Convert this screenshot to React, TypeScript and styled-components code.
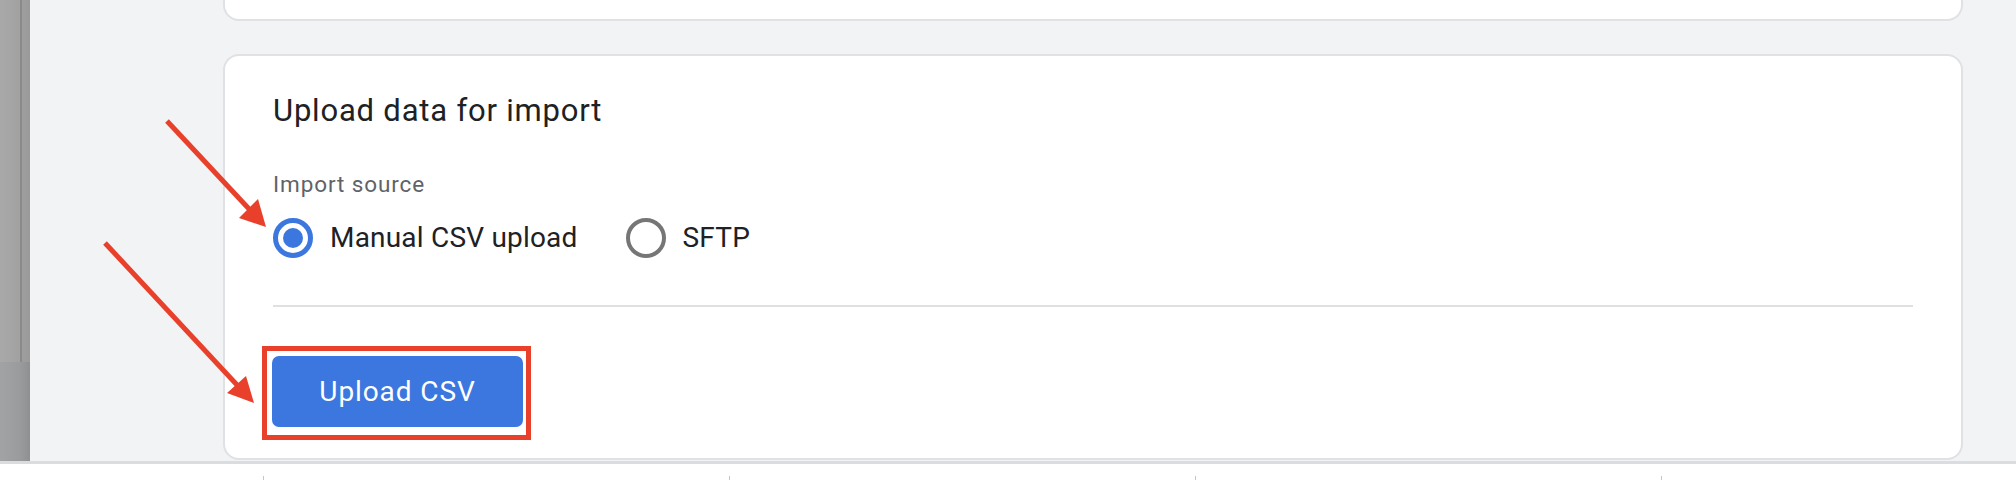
import React from "react";
import styled, { createGlobalStyle } from "styled-components";

const GlobalStyle = createGlobalStyle`
  html, body { margin: 0; padding: 0; background: #ffffff; }
  body { font-family: Roboto, "Liberation Sans", Arial, sans-serif; }
  * { box-sizing: border-box; }
`;

const Screen = styled.div`
  position: relative;
  width: 2016px;
  height: 480px;
  display: grid;
  grid-template-rows: 461px 3px 16px;
  overflow: hidden;
`;

const MainArea = styled.div`
  display: flex;
  background: #f1f3f4;
`;

const LeftStrip = styled.div`
  width: 30px;
  display: grid;
  grid-template-rows: 362px 1fr;
`;

const StripSegment = styled.div<{ $lower?: boolean }>`
  background: ${(p) =>
    p.$lower
      ? "linear-gradient(to right, #a2a3a5 0, #9a9b9d 20px, #8f9092 30px)"
      : "linear-gradient(to right, #a9a9a9 0, #a1a1a1 20px, #8a8a8a 20px, #8a8a8a 22px, #9e9e9e 22px, #9a9a9a 30px)"};
`;

const Content = styled.div`
  flex: 1;
  padding: 0 53px 0 193px;
  display: flex;
  flex-direction: column;
  gap: 33px;
`;

const TopCard = styled.div`
  height: 21px;
  background: #ffffff;
  border: 2px solid #dfe1e5;
  border-top: none;
  border-radius: 0 0 16px 16px;
`;

const Card = styled.section`
  height: 406px;
  background: #ffffff;
  border: 2px solid #dfe1e5;
  border-radius: 16px;
  padding: 37px 48px 0 48px;
  display: flex;
  flex-direction: column;
`;

const Title = styled.h2`
  margin: 0;
  font-family: Roboto, "Liberation Sans", Arial, sans-serif;
  font-weight: 400;
  font-size: 31px;
  line-height: 36px;
  letter-spacing: 0.8px;
  color: #202124;
`;

const FieldLabel = styled.div`
  margin-top: 43px;
  font-size: 22.5px;
  line-height: 24px;
  letter-spacing: 0.9px;
  color: #5f6368;
`;

const RadioRow = styled.div`
  margin-top: 22px;
  height: 40px;
  display: flex;
  align-items: center;
  gap: 48px;
`;

const Option = styled.label`
  display: flex;
  align-items: center;
  gap: 17px;
  font-size: 28px;
  line-height: 40px;
  letter-spacing: 0.2px;
  color: #202124;
`;

const Radio = styled.span<{ $checked?: boolean }>`
  position: relative;
  width: 40px;
  height: 40px;
  flex: none;
  border-radius: 50%;
  border: ${(p) => (p.$checked ? "5px solid #3b77df" : "4.5px solid #767676")};
  &::after {
    content: "";
    display: ${(p) => (p.$checked ? "block" : "none")};
    position: absolute;
    left: 50%;
    top: 50%;
    width: 20px;
    height: 20px;
    margin: -10px 0 0 -10px;
    border-radius: 50%;
    background: #3b77df;
  }
`;

const Divider = styled.hr`
  margin: 47px 0 0 0;
  border: none;
  height: 2px;
  background: #e0e0e0;
`;

const Highlight = styled.div`
  margin: 39px 0 0 -11px;
  align-self: flex-start;
  border: 5px solid #e8402a;
  padding: 5px 3px 8px 5px;
  background: #ffffff;
`;

const PrimaryButton = styled.button`
  display: block;
  width: 251px;
  height: 71px;
  border: none;
  border-radius: 7px;
  background: #3b77df;
  color: #ffffff;
  font-family: Roboto, "Liberation Sans", Arial, sans-serif;
  font-size: 28px;
  font-weight: 400;
  letter-spacing: 0.9px;
  cursor: pointer;
`;

const BottomLine = styled.div`
  background: #dadce0;
`;

const BottomStrip = styled.div`
  background: #ffffff;
  display: flex;
  align-items: flex-end;
  gap: 465px;
  padding-left: 263px;
`;

const Tick = styled.span`
  width: 1px;
  height: 4px;
  background: #c6c6c6;
`;

const Overlay = styled.svg`
  position: absolute;
  left: 0;
  top: 0;
  width: 2016px;
  height: 480px;
  pointer-events: none;
`;

const ARROW = "#e8402a";

export default function App() {
  return (
    <>
      <GlobalStyle />
      <Screen>
        <MainArea>
          <LeftStrip>
            <StripSegment />
            <StripSegment $lower />
          </LeftStrip>
          <Content>
            <TopCard />
            <Card>
              <Title>Upload data for import</Title>
              <FieldLabel>Import source</FieldLabel>
              <RadioRow>
                <Option>
                  <Radio $checked />
                  Manual CSV upload
                </Option>
                <Option>
                  <Radio />
                  SFTP
                </Option>
              </RadioRow>
              <Divider />
              <Highlight>
                <PrimaryButton>Upload CSV</PrimaryButton>
              </Highlight>
            </Card>
          </Content>
        </MainArea>
        <BottomLine />
        <BottomStrip>
          <Tick />
          <Tick />
          <Tick />
          <Tick />
        </BottomStrip>
        <Overlay viewBox="0 0 2016 480">
          <line x1="167" y1="121" x2="250" y2="210" stroke={ARROW} strokeWidth="5" />
          <polygon points="266,227 239,218 258,199" fill={ARROW} />
          <line x1="105" y1="243" x2="238" y2="386" stroke={ARROW} strokeWidth="5" />
          <polygon points="254,403 227,393 246,376" fill={ARROW} />
        </Overlay>
      </Screen>
    </>
  );
}
